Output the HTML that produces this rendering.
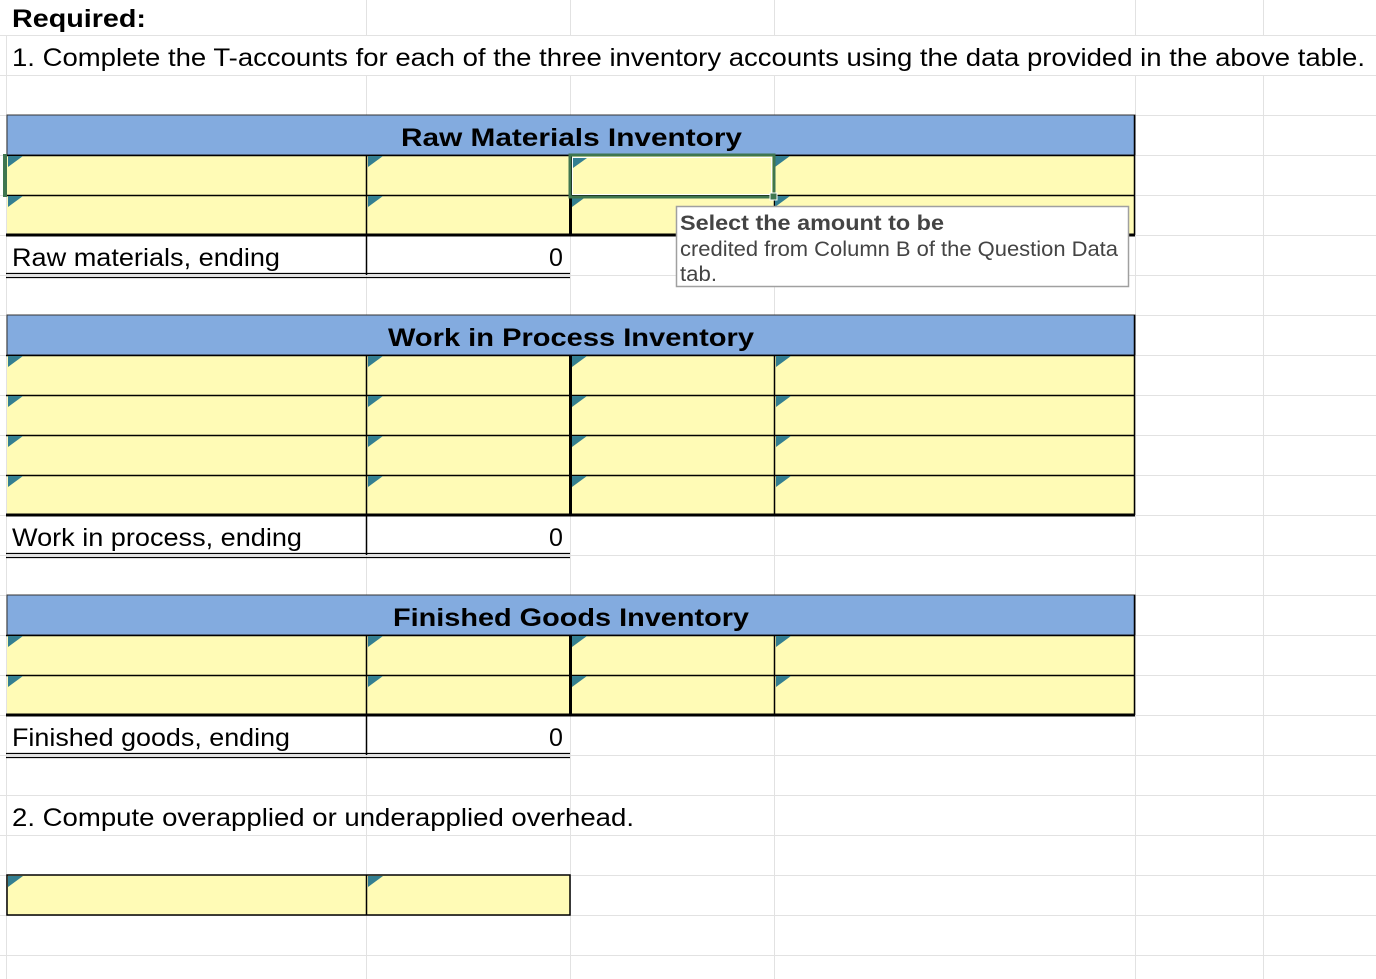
<!DOCTYPE html>
<html><head><meta charset="utf-8"><style>
html,body{margin:0;padding:0;background:#fff;}
svg{display:block;}
text{font-family:"Liberation Sans",sans-serif;}
</style></head><body>
<svg width="1376" height="979" viewBox="0 0 1376 979" xmlns="http://www.w3.org/2000/svg">
<g stroke="#e2e2e2" stroke-width="1">
<line x1="6.5" y1="0" x2="6.5" y2="979"/>
<line x1="366.5" y1="0" x2="366.5" y2="979"/>
<line x1="570.5" y1="0" x2="570.5" y2="979"/>
<line x1="774.5" y1="0" x2="774.5" y2="979"/>
<line x1="1135.5" y1="0" x2="1135.5" y2="979"/>
<line x1="1263.5" y1="0" x2="1263.5" y2="979"/>
<line x1="0" y1="35.5" x2="1376" y2="35.5"/>
<line x1="0" y1="75.5" x2="1376" y2="75.5"/>
<line x1="0" y1="115.5" x2="1376" y2="115.5"/>
<line x1="0" y1="155.5" x2="1376" y2="155.5"/>
<line x1="0" y1="195.5" x2="1376" y2="195.5"/>
<line x1="0" y1="235.5" x2="1376" y2="235.5"/>
<line x1="0" y1="275.5" x2="1376" y2="275.5"/>
<line x1="0" y1="315.5" x2="1376" y2="315.5"/>
<line x1="0" y1="355.5" x2="1376" y2="355.5"/>
<line x1="0" y1="395.5" x2="1376" y2="395.5"/>
<line x1="0" y1="435.5" x2="1376" y2="435.5"/>
<line x1="0" y1="475.5" x2="1376" y2="475.5"/>
<line x1="0" y1="515.5" x2="1376" y2="515.5"/>
<line x1="0" y1="555.5" x2="1376" y2="555.5"/>
<line x1="0" y1="595.5" x2="1376" y2="595.5"/>
<line x1="0" y1="635.5" x2="1376" y2="635.5"/>
<line x1="0" y1="675.5" x2="1376" y2="675.5"/>
<line x1="0" y1="715.5" x2="1376" y2="715.5"/>
<line x1="0" y1="755.5" x2="1376" y2="755.5"/>
<line x1="0" y1="795.5" x2="1376" y2="795.5"/>
<line x1="0" y1="835.5" x2="1376" y2="835.5"/>
<line x1="0" y1="875.5" x2="1376" y2="875.5"/>
<line x1="0" y1="915.5" x2="1376" y2="915.5"/>
<line x1="0" y1="955.5" x2="1376" y2="955.5"/>
</g>
<rect x="0" y="36" width="1376" height="39" fill="#fff"/>
<rect x="0" y="0" width="1376" height="35" fill="#fff"/>
<line x1="366.5" y1="0" x2="366.5" y2="35" stroke="#e2e2e2"/>
<line x1="570.5" y1="0" x2="570.5" y2="35" stroke="#e2e2e2"/>
<line x1="774.5" y1="0" x2="774.5" y2="35" stroke="#e2e2e2"/>
<line x1="1135.5" y1="0" x2="1135.5" y2="35" stroke="#e2e2e2"/>
<line x1="1263.5" y1="0" x2="1263.5" y2="35" stroke="#e2e2e2"/>
<line x1="0" y1="35.5" x2="1376" y2="35.5" stroke="#e2e2e2"/>
<line x1="6.5" y1="35" x2="6.5" y2="75" stroke="#e2e2e2"/>

<text x="12" y="27" font-size="25" font-weight="bold" fill="#000" textLength="134" lengthAdjust="spacingAndGlyphs">Required:</text>
<text x="12" y="66" font-size="25" fill="#000" textLength="1353" lengthAdjust="spacingAndGlyphs">1. Complete the T-accounts for each of the three inventory accounts using the data provided in the above table.</text>

<rect x="7" y="115" width="1128" height="40" fill="#83abdf" stroke="#333" stroke-width="1"/>
<text x="401" y="146" font-size="25" font-weight="bold" textLength="341" lengthAdjust="spacingAndGlyphs" font-family="DejaVu Sans">Raw Materials Inventory</text>
<rect x="7" y="155" width="1128" height="80" fill="#fffbb6"/>
<g stroke="#000" stroke-width="1.5">
<line x1="6" y1="155.5" x2="1135" y2="155.5"/>
<line x1="6" y1="195.5" x2="1135" y2="195.5"/>
<line x1="366.5" y1="155" x2="366.5" y2="275"/>
<line x1="774.5" y1="155" x2="774.5" y2="235"/>
<line x1="1134.5" y1="115" x2="1134.5" y2="235"/>
</g>
<line x1="570.5" y1="155" x2="570.5" y2="235" stroke="#000" stroke-width="3"/>
<line x1="6" y1="235" x2="1135" y2="235" stroke="#000" stroke-width="3"/>
<text x="12" y="266" font-size="25" textLength="268" lengthAdjust="spacingAndGlyphs">Raw materials, ending</text>
<text x="549" y="266" font-size="25">0</text>
<line x1="6" y1="273.5" x2="570" y2="273.5" stroke="#000" stroke-width="1.2"/>
<line x1="6" y1="277.5" x2="570" y2="277.5" stroke="#000" stroke-width="1.2"/>

<rect x="7" y="315" width="1128" height="40" fill="#83abdf" stroke="#333" stroke-width="1"/>
<text x="388" y="346" font-size="25" font-weight="bold" textLength="366" lengthAdjust="spacingAndGlyphs" font-family="DejaVu Sans">Work in Process Inventory</text>
<rect x="7" y="355" width="1128" height="160" fill="#fffbb6"/>
<g stroke="#000" stroke-width="1.5">
<line x1="6" y1="355.5" x2="1135" y2="355.5"/>
<line x1="6" y1="395.5" x2="1135" y2="395.5"/>
<line x1="6" y1="435.5" x2="1135" y2="435.5"/>
<line x1="6" y1="475.5" x2="1135" y2="475.5"/>
<line x1="366.5" y1="355" x2="366.5" y2="555"/>
<line x1="774.5" y1="355" x2="774.5" y2="515"/>
<line x1="1134.5" y1="315" x2="1134.5" y2="515"/>
</g>
<line x1="570.5" y1="355" x2="570.5" y2="515" stroke="#000" stroke-width="3"/>
<line x1="6" y1="515" x2="1135" y2="515" stroke="#000" stroke-width="3"/>
<text x="12" y="546" font-size="25" textLength="290" lengthAdjust="spacingAndGlyphs">Work in process, ending</text>
<text x="549" y="546" font-size="25">0</text>
<line x1="6" y1="553.5" x2="570" y2="553.5" stroke="#000" stroke-width="1.2"/>
<line x1="6" y1="557.5" x2="570" y2="557.5" stroke="#000" stroke-width="1.2"/>

<rect x="7" y="595" width="1128" height="40" fill="#83abdf" stroke="#333" stroke-width="1"/>
<text x="393" y="626" font-size="25" font-weight="bold" textLength="356" lengthAdjust="spacingAndGlyphs" font-family="DejaVu Sans">Finished Goods Inventory</text>
<rect x="7" y="635" width="1128" height="80" fill="#fffbb6"/>
<g stroke="#000" stroke-width="1.5">
<line x1="6" y1="635.5" x2="1135" y2="635.5"/>
<line x1="6" y1="675.5" x2="1135" y2="675.5"/>
<line x1="366.5" y1="635" x2="366.5" y2="755"/>
<line x1="774.5" y1="635" x2="774.5" y2="715"/>
<line x1="1134.5" y1="595" x2="1134.5" y2="715"/>
</g>
<line x1="570.5" y1="635" x2="570.5" y2="715" stroke="#000" stroke-width="3"/>
<line x1="6" y1="715" x2="1135" y2="715" stroke="#000" stroke-width="3"/>
<text x="12" y="746" font-size="25" textLength="278" lengthAdjust="spacingAndGlyphs">Finished goods, ending</text>
<text x="549" y="746" font-size="25">0</text>
<line x1="6" y1="753.5" x2="570" y2="753.5" stroke="#000" stroke-width="1.2"/>
<line x1="6" y1="757.5" x2="570" y2="757.5" stroke="#000" stroke-width="1.2"/>

<text x="12" y="826" font-size="25" textLength="622" lengthAdjust="spacingAndGlyphs">2. Compute overapplied or underapplied overhead.</text>

<rect x="7" y="875" width="563" height="40" fill="#fffbb6" stroke="#000" stroke-width="1.5"/>
<line x1="366.5" y1="875" x2="366.5" y2="915" stroke="#000" stroke-width="1.5"/>

<g fill="#347f91">
<path d="M8,156 h15 l-15,11z"/><path d="M368,156 h15 l-15,11z"/><path d="M775,156 h15 l-15,11z"/>
<path d="M8,196 h15 l-15,11z"/><path d="M368,196 h15 l-15,11z"/><path d="M572,196 h15 l-15,11z"/><path d="M775,196 h15 l-15,11z"/>
<path d="M8,356 h15 l-15,11z"/><path d="M368,356 h15 l-15,11z"/><path d="M572,356 h15 l-15,11z"/><path d="M776,356 h15 l-15,11z"/>
<path d="M8,396 h15 l-15,11z"/><path d="M368,396 h15 l-15,11z"/><path d="M572,396 h15 l-15,11z"/><path d="M776,396 h15 l-15,11z"/>
<path d="M8,436 h15 l-15,11z"/><path d="M368,436 h15 l-15,11z"/><path d="M572,436 h15 l-15,11z"/><path d="M776,436 h15 l-15,11z"/>
<path d="M8,476 h15 l-15,11z"/><path d="M368,476 h15 l-15,11z"/><path d="M572,476 h15 l-15,11z"/><path d="M776,476 h15 l-15,11z"/>
<path d="M8,636 h15 l-15,11z"/><path d="M368,636 h15 l-15,11z"/><path d="M572,636 h15 l-15,11z"/><path d="M776,636 h15 l-15,11z"/>
<path d="M8,676 h15 l-15,11z"/><path d="M368,676 h15 l-15,11z"/><path d="M572,676 h15 l-15,11z"/><path d="M776,676 h15 l-15,11z"/>
<path d="M8,876 h15 l-15,11z"/><path d="M368,876 h15 l-15,11z"/>
</g>

<rect x="3" y="154" width="4" height="43" fill="#3f7650"/>
<rect x="570" y="155" width="204" height="42" fill="none" stroke="#3f7650" stroke-width="3"/>
<rect x="572.5" y="157.5" width="199" height="37" fill="none" stroke="#fff" stroke-width="1"/>
<path d="M573,158 h14 l-14,10z" fill="#347f91"/>
<rect x="770" y="193" width="7" height="7" fill="#3f7650" stroke="#fff" stroke-width="1"/>

<rect x="676.5" y="206.5" width="452" height="80" fill="#fff" stroke="#a0a0a0" stroke-width="1.5"/>
<text x="680" y="230" font-size="21" font-weight="bold" fill="#444" textLength="264" lengthAdjust="spacingAndGlyphs">Select the amount to be</text>
<text x="680" y="256" font-size="21" fill="#444" textLength="438" lengthAdjust="spacingAndGlyphs">credited from Column B of the Question Data</text>
<text x="680" y="281" font-size="21" fill="#444" textLength="37" lengthAdjust="spacingAndGlyphs">tab.</text>
</svg>
</body></html>
